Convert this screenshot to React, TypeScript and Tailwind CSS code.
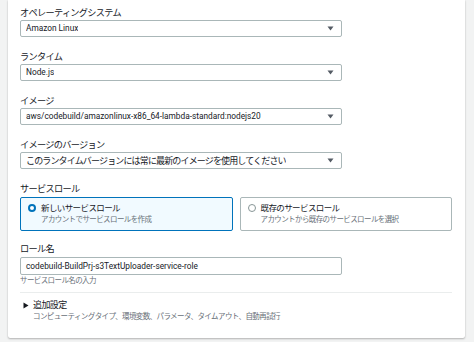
const font = { fontFamily: '"Noto Sans", "Noto Sans CJK JP", sans-serif' };
const latin = { fontFamily: 'Roboto, "Noto Sans", sans-serif' };

function Caret() {
  return (
    <svg width="7" height="5" viewBox="0 0 7 5" className="shrink-0">
      <path d="M0.5 0.5h6L3.5 4.5z" fill="#545b64" />
    </svg>
  );
}

function Label({ children }: { children: React.ReactNode }) {
  return (
    <div className="h-[15px] text-[9.2px] leading-[15px] tracking-[-0.7px] text-[#16191f]">{children}</div>
  );
}

function Select({ value, jp }: { value: string; jp?: boolean }) {
  return (
    <div className="flex h-[17px] w-[322px] items-center justify-between rounded-[2px] border border-[#aab7b8] bg-white pl-[5px] pr-[7px]">
      {jp ? (
        <span className="truncate text-[9px] tracking-[-0.85px] text-[#16191f]">{value}</span>
      ) : (
        <span className="truncate text-[8.3px] text-[#16191f]" style={latin}>
          {value}
        </span>
      )}
      <Caret />
    </div>
  );
}

function Field({ label, value, jp }: { label: string; value: string; jp?: boolean }) {
  return (
    <div className="flex flex-col">
      <Label>{label}</Label>
      <Select value={value} jp={jp} />
    </div>
  );
}

function RadioCard({
  selected,
  title,
  desc,
}: {
  selected?: boolean;
  title: string;
  desc: string;
}) {
  return (
    <div
      className={
        selected
          ? "flex h-[34px] flex-1 gap-[5px] rounded-[2px] border border-[#0073bb] bg-[#f1faff] pl-[7px] pt-[3px]"
          : "flex h-[34px] flex-1 gap-[5px] rounded-[2px] border border-[#aab7b8] bg-white pl-[7px] pt-[3px]"
      }
    >
      <div
        className={
          selected
            ? "mt-[3px] h-[8px] w-[8px] shrink-0 rounded-full border-[2.5px] border-[#0073bb] bg-white"
            : "mt-[3px] h-[8px] w-[8px] shrink-0 rounded-full border border-[#879596] bg-white"
        }
      />
      <div className="flex flex-col">
        <span className="text-[8.5px] leading-[13px] tracking-[-0.6px] text-[#16191f]">{title}</span>
        <span className="text-[7.5px] leading-[11px] tracking-[-0.6px] text-[#687078]">{desc}</span>
      </div>
    </div>
  );
}

export default function App() {
  return (
    <div className="h-[342px] w-[474px] overflow-hidden bg-[#f2f3f3]" style={font}>
      <div className="ml-[8px] w-[457px] rounded-b-[2px] bg-white pb-[17px] pl-[12px] pr-[13px] pt-[5px] shadow-[0_1px_2px_rgba(0,0,0,0.25),0_0_1px_rgba(0,0,0,0.15)]">
        <div className="flex flex-col gap-[12px]">
          <Field label="オペレーティングシステム" value="Amazon Linux" />
          <Field label="ランタイム" value="Node.js" />
          <Field label="イメージ" value="aws/codebuild/amazonlinux-x86_64-lambda-standard:nodejs20" />
          <Field
            label="イメージのバージョン"
            value="このランタイムバージョンには常に最新のイメージを使用してください"
            jp
          />
          <div className="flex flex-col gap-[1px]">
            <Label>サービスロール</Label>
            <div className="flex gap-[7px]">
              <RadioCard selected title="新しいサービスロール" desc="アカウントでサービスロールを作成" />
              <RadioCard title="既存のサービスロール" desc="アカウントから既存のサービスロールを選択" />
            </div>
          </div>
        </div>
        <div className="mt-[10px] flex flex-col">
          <Label>ロール名</Label>
          <div className="mt-[1px] flex h-[18px] w-[322px] items-center rounded-[2px] border border-[#aab7b8] bg-white pl-[5px]">
            <span className="text-[8.3px] text-[#16191f]" style={latin}>
              codebuild-BuildPrj-s3TextUploader-service-role
            </span>
          </div>
          <div className="text-[7.5px] leading-[11px] tracking-[-0.6px] text-[#687078]">サービスロール名の入力</div>
        </div>
        <div className="mt-[6px] border-t border-[#eaeded]" />
        <div className="mt-[6px] flex flex-col pl-[3px]">
          <div className="flex items-center gap-[4px]">
            <svg width="6" height="7" viewBox="0 0 6 7">
              <path d="M0.5 0.5L5.5 3.5L0.5 6.5z" fill="#16191f" />
            </svg>
            <span className="text-[9px] leading-[12px] tracking-[-0.6px] text-[#16191f]">追加設定</span>
          </div>
          <span className="pl-[10px] text-[7.5px] leading-[10px] tracking-[-0.6px] text-[#687078]">
            コンピューティングタイプ、環境変数、パラメータ、タイムアウト、自動再試行
          </span>
        </div>
      </div>
    </div>
  );
}
